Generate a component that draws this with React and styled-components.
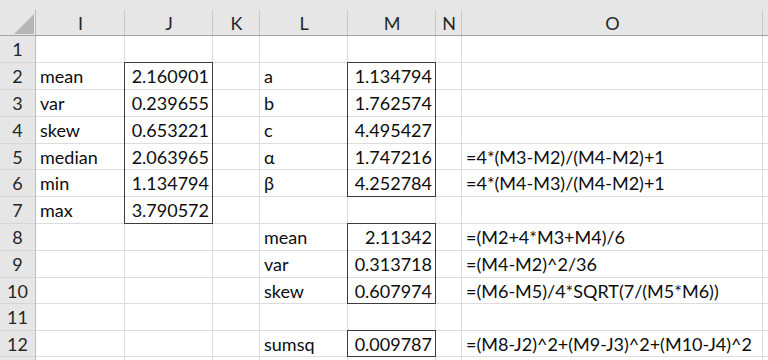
import React from "react";
import styled, { createGlobalStyle } from "styled-components";

const Global = createGlobalStyle`
  html, body { margin: 0; padding: 0; background: #ffffff; overflow: hidden; }
  body { font-family: Lato, "Open Sans", "Liberation Sans", sans-serif; }
`;

const COLS = ["I", "J", "K", "L", "M", "N", "O", ""];
const ROW_HEIGHTS = [27, 27, 27, 27, 26, 27, 27, 27, 27, 26, 27, 26, 27];
const VISIBLE_ROWS = 12;

const Sheet = styled.div`
  display: grid;
  grid-template-columns: 36px 89px 88px 47px 88px 88px 26px 301px 1fr;
  grid-template-rows: 36px ${ROW_HEIGHTS.map((h) => h + "px").join(" ")};
  width: 768px;
  height: 360px;
  overflow: hidden;
  font-size: 18px;
  color: #111;
`;

const Corner = styled.div`
  grid-row: 1;
  grid-column: 1;
  box-sizing: border-box;
  background: linear-gradient(#bcbcbc, #bcbcbc) right 10px / 1px calc(100% - 10px) no-repeat, #e6e6e6;
  border-bottom: 1px solid #a3a3a3;
  display: flex;
  align-items: flex-end;
  justify-content: flex-end;
  padding: 0 2px 1px 0;
`;

const ColHead = styled.div`
  grid-row: 1;
  grid-column: ${(p) => p.$c};
  box-sizing: border-box;
  background: ${(p) =>
    p.$last
      ? "#e6e6e6"
      : "linear-gradient(#c9c9c9, #c9c9c9) right 10px / 1px calc(100% - 10px) no-repeat, #e6e6e6"};
  border-bottom: 1px solid #a3a3a3;
  padding-top: 10px;
  display: flex;
  align-items: center;
  justify-content: center;
  color: #262626;
  line-height: 1;
`;

const RowHead = styled.div`
  grid-row: ${(p) => p.$r};
  grid-column: 1;
  box-sizing: border-box;
  background: #e6e6e6;
  border-right: 1px solid #bcbcbc;
  border-bottom: 1px solid #d6d6d6;
  color: #262626;
  text-align: center;
  line-height: 26px;
`;

const Cell = styled.div`
  grid-row: ${(p) => p.$r};
  grid-column: ${(p) => p.$c};
  box-sizing: border-box;
  border-right: 1px solid #dcdcdc;
  border-bottom: 1px solid #dcdcdc;
  padding: 0 3px 0 4px;
  line-height: 26px;
  white-space: nowrap;
  text-align: ${(p) => (p.$num ? "right" : "left")};
  color: #0d0d0d;
`;

const Box = styled.div`
  grid-row: ${(p) => p.$rows};
  grid-column: ${(p) => p.$c};
  box-sizing: border-box;
  margin: -1px 0 0 -1px;
  border: 1px solid #3c3c3c;
  pointer-events: none;
  z-index: 1;
`;

// sheet data: row -> { colLetter: value }
const DATA = {
  2: { I: "mean", J: "2.160901", L: "a", M: "1.134794" },
  3: { I: "var", J: "0.239655", L: "b", M: "1.762574" },
  4: { I: "skew", J: "0.653221", L: "c", M: "4.495427" },
  5: { I: "median", J: "2.063965", L: "α", M: "1.747216", O: "=4*(M3-M2)/(M4-M2)+1" },
  6: { I: "min", J: "1.134794", L: "β", M: "4.252784", O: "=4*(M4-M3)/(M4-M2)+1" },
  7: { I: "max", J: "3.790572" },
  8: { L: "mean", M: "2.11342", O: "=(M2+4*M3+M4)/6" },
  9: { L: "var", M: "0.313718", O: "=(M4-M2)^2/36" },
  10: { L: "skew", M: "0.607974", O: "=(M6-M5)/4*SQRT(7/(M5*M6))" },
  12: { L: "sumsq", M: "0.009787", O: "=(M8-J2)^2+(M9-J3)^2+(M10-J4)^2" },
};

const NUM_COLS = new Set(["J", "M"]);

export default function App() {
  const cells = [];
  ROW_HEIGHTS.forEach((_, i) => {
    const rowNum = i + 1;
    const gridRow = i + 2;
    cells.push(
      <RowHead key={"rh" + rowNum} $r={gridRow}>
        {rowNum <= VISIBLE_ROWS ? rowNum : ""}
      </RowHead>
    );
    COLS.forEach((col, ci) => {
      const val = col && DATA[rowNum] ? DATA[rowNum][col] : undefined;
      cells.push(
        <Cell key={rowNum + "-" + ci} $r={gridRow} $c={ci + 2} $num={NUM_COLS.has(col)}>
          {val || ""}
        </Cell>
      );
    });
  });

  return (
    <>
      <Global />
      <Sheet>
        <Corner>
          <svg width="20" height="20" viewBox="0 0 20 20">
            <polygon points="0,20 20,20 20,0" fill="#b6b6b6" />
          </svg>
        </Corner>
        {COLS.map((c, i) => (
          <ColHead key={"ch" + i} $c={i + 2} $last={!c}>
            {c}
          </ColHead>
        ))}
        {cells}
        <Box $rows="3 / 9" $c="3 / 4" />
        <Box $rows="3 / 8" $c="6 / 7" />
        <Box $rows="9 / 12" $c="6 / 7" />
        <Box $rows="13 / 14" $c="6 / 7" />
      </Sheet>
    </>
  );
}
